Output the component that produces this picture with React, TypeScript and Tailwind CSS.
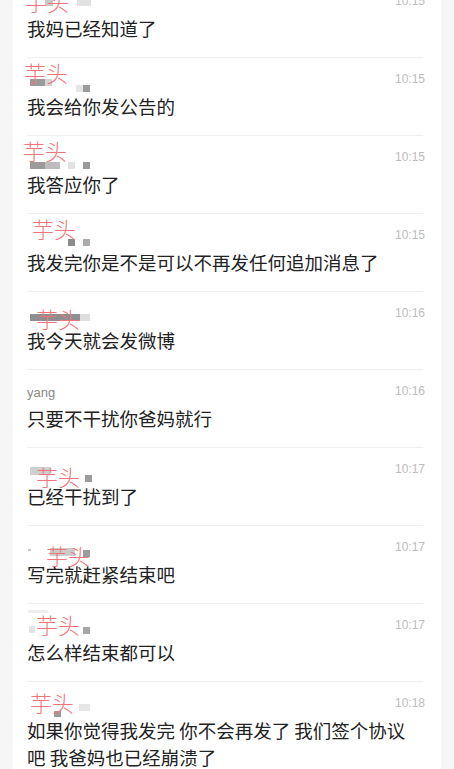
type Block = [number, number, number, number, string];

type Msg = {
  time: string;
  text: string;
  name?: string;
  red?: [number, number];
  blocks?: Block[];
};

const msgs: Msg[] = [
  {
    time: '10:15',
    text: '我妈已经知道了',
    red: [-2, 10],
    blocks: [
      [18, 18, 8, 8, '#c8c8c8'],
      [50, 18, 14, 8, '#e2e2e2'],
    ],
  },
  {
    time: '10:15',
    text: '我会给你发公告的',
    red: [-3, 3],
    blocks: [
      [3, 21, 15, 7, '#9a9a9a'],
      [18, 21, 7, 7, '#d4d4d4'],
      [49, 27, 7, 7, '#e6e6e6'],
      [56, 27, 7, 7, '#9c9c9c'],
    ],
  },
  {
    time: '10:15',
    text: '我答应你了',
    red: [-4, 3],
    blocks: [
      [3, 26, 15, 7, '#9a9a9a'],
      [18, 26, 15, 7, '#bdbdbd'],
      [41, 26, 7, 7, '#e2e2e2'],
      [56, 26, 7, 7, '#9a9a9a'],
    ],
  },
  {
    time: '10:15',
    text: '我发完你是不是可以不再发任何追加消息了',
    red: [5, 3],
    blocks: [
      [41, 25, 7, 7, '#8c8c8c'],
      [56, 25, 7, 7, '#ababab'],
    ],
  },
  {
    time: '10:16',
    text: '我今天就会发微博',
    red: [9, 15],
    blocks: [
      [3, 22, 50, 7, '#8e8e8e'],
      [53, 22, 10, 7, '#dedede'],
    ],
  },
  { time: '10:16', text: '只要不干扰你爸妈就行', name: 'yang' },
  {
    time: '10:17',
    text: '已经干扰到了',
    red: [9, 17],
    blocks: [
      [3, 19, 20, 8, '#cfcfcf'],
      [58, 27, 7, 7, '#9c9c9c'],
    ],
  },
  {
    time: '10:17',
    text: '写完就赶紧结束吧',
    red: [19, 18],
    blocks: [
      [1, 23, 3, 2, '#c8c8c8'],
      [23, 22, 25, 8, '#cccccc'],
      [56, 24, 7, 7, '#9c9c9c'],
    ],
  },
  {
    time: '10:17',
    text: '怎么样结束都可以',
    red: [9, 9],
    blocks: [
      [1, 6, 20, 3, '#eeeeee'],
      [2, 22, 6, 7, '#e4e4e4'],
      [56, 23, 7, 7, '#a6a6a6'],
    ],
  },
  {
    time: '10:18',
    text: '如果你觉得我发完 你不会再发了 我们签个协议吧 我爸妈也已经崩溃了',
    red: [3, 9],
    blocks: [
      [27, 29, 7, 6, '#9a9a9a'],
      [52, 22, 11, 7, '#e6e6e6'],
    ],
  },
];

function Row({ m, first }: { m: Msg; first: boolean }) {
  return (
    <div className={first ? 'pt-px' : 'border-t border-[#efefef]'}>
      <div className="relative flex h-[35px] justify-between">
        {/* 打码的昵称 + 手写红字 */}
        <div className="relative h-full w-[100px]">
          {m.blocks?.map(([x, y, w, h, c], i) => (
            <span
              key={i}
              className="absolute blur-[0.6px]"
              style={{ left: x, top: y, width: w, height: h, background: c }}
            />
          ))}
          {m.red && (
            <span
              className="absolute whitespace-nowrap text-[22px] font-light leading-[22px] text-[#f0767a] [font-family:'Noto_Sans_CJK_SC',sans-serif]"
              style={{ left: m.red[0], top: m.red[1] }}
            >
              芋头
            </span>
          )}
          {m.name && (
            <span className="absolute left-0 top-[16px] text-[13px] leading-[14px] text-[#8a8a8a] [font-family:'Liberation_Sans',sans-serif]">
              {m.name}
            </span>
          )}
        </div>
        <span className="-mr-[2px] mt-[14px] text-[12px] leading-[14px] text-[#bcbcbc] [font-family:'Liberation_Sans',sans-serif]">
          {m.time}
        </span>
      </div>
      <p className="pb-[15px] text-[18.5px] leading-[27px] text-[#222222] [font-family:'Noto_Sans_CJK_SC',sans-serif]">
        {m.text}
      </p>
    </div>
  );
}

export default function App() {
  return (
    <main className="h-screen overflow-hidden bg-[#f6f6f6]">
      <div className="mx-[13px] h-full overflow-hidden bg-white pl-[14px] pr-[18px]">
        <div className="-mt-[21px]">
          {msgs.map((m, i) => (
            <Row key={i} m={m} first={i === 0} />
          ))}
        </div>
      </div>
    </main>
  );
}
